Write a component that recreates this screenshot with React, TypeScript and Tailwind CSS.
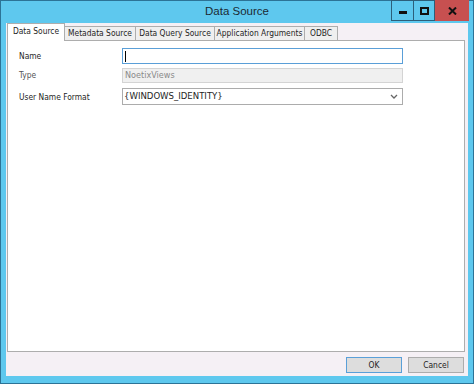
import React from 'react';

const tabs = [
    { label: 'Data Source', w: 58 },
    { label: 'Metadata Source', w: 71 },
    { label: 'Data Query Source', w: 79 },
    { label: 'Application Arguments', w: 90 },
    { label: 'ODBC', w: 33 },
];

const font = { fontFamily: '"DejaVu Sans Condensed", "Liberation Sans", sans-serif' };

export default function App() {
    return (
        <div
            className="w-[474px] h-[384px] bg-[#5ec8ee] border border-[#2c7396] flex flex-col text-[8.4px] text-[#1e1e1e]"
            style={font}
        >
            {/* title bar */}
            <div className="relative h-[22px] shrink-0 flex items-center justify-center">
                <span className="text-[11.5px] text-[#1c2a33]" style={{ fontFamily: '"Liberation Sans", Arial, sans-serif' }}>
                    Data Source
                </span>
                <div className="absolute -top-[1px] right-[4px] flex h-[21px]">
                    <div className="w-[22px] border border-[#2c5f7a] border-r-0 flex items-center justify-center">
                        <div className="w-[8px] h-[3px] bg-[#111] mt-[4px]" />
                    </div>
                    <div className="w-[22px] border border-[#2c5f7a] flex items-center justify-center">
                        <div className="w-[9px] h-[8px] border-2 border-[#111]" />
                    </div>
                    <div className="w-[34px] bg-[#c75050] flex items-center justify-center">
                        <svg width="9" height="8" viewBox="0 0 9 8">
                            <path d="M1 0.5 L8 7.5 M8 0.5 L1 7.5" stroke="#111" strokeWidth="2" />
                        </svg>
                    </div>
                </div>
            </div>

            {/* client area */}
            <div className="flex-1 mx-[5px] mb-[7px] bg-[#f5f0f5] flex flex-col">
                {/* tab strip */}
                <div className="h-[17px] flex items-end pl-[1px] shrink-0">
                    {tabs.map((t, i) =>
                        i === 0 ? (
                            <div
                                key={t.label}
                                style={{ width: t.w }}
                                className="h-[18px] bg-white border border-[#adadad] border-b-0 flex items-center justify-center whitespace-nowrap relative z-10 -mb-[1px] pb-[2px]"
                            >
                                {t.label}
                            </div>
                        ) : (
                            <div
                                key={t.label}
                                style={{ width: t.w }}
                                className="h-[14px] bg-[#efefef] border border-[#adadad] border-l-0 border-b-0 flex items-center justify-center whitespace-nowrap"
                            >
                                {t.label}
                            </div>
                        )
                    )}
                </div>

                {/* tab page */}
                <div className="flex-1 ml-[1px] mr-[3px] bg-white border border-[#adadad] pt-[7px] pl-[11px]">
                    <div className="grid grid-cols-[103px_281px] gap-y-[4px] items-center">
                        <span>Name</span>
                        <div className="h-[16px] border border-[#5a9fd8] flex items-center pl-[2px]">
                            <div className="w-[1px] h-[11px] bg-black" />
                        </div>
                        <span className="text-[#555]">Type</span>
                        <div className="h-[15px] border border-[#d4d4d4] bg-[#f0f0f0] flex items-center pl-[2px] text-[#8a8a8a] text-[9px]">
                            NoetixViews
                        </div>
                        <span className="mt-[2px]">User Name Format</span>
                        <div className="h-[17px] mt-[1px] border border-[#acacac] flex items-center justify-between pl-[1px] pr-[4px] text-[9.5px]">
                            <span>{'{WINDOWS_IDENTITY}'}</span>
                            <svg width="8" height="5" viewBox="0 0 8 5">
                                <path d="M1 1 L4 4 L7 1" fill="none" stroke="#666" strokeWidth="1.3" />
                            </svg>
                        </div>
                    </div>
                </div>

                {/* footer */}
                <div className="h-[24px] shrink-0 flex items-center justify-end gap-[6px] pr-[4px] pt-[2px]">
                    <button className="w-[56px] h-[16px] bg-[#dddddd] border border-[#5a9fd8] leading-none">OK</button>
                    <button className="w-[56px] h-[16px] bg-[#dddddd] border border-[#acacac] leading-none">Cancel</button>
                </div>
            </div>
        </div>
    );
}
